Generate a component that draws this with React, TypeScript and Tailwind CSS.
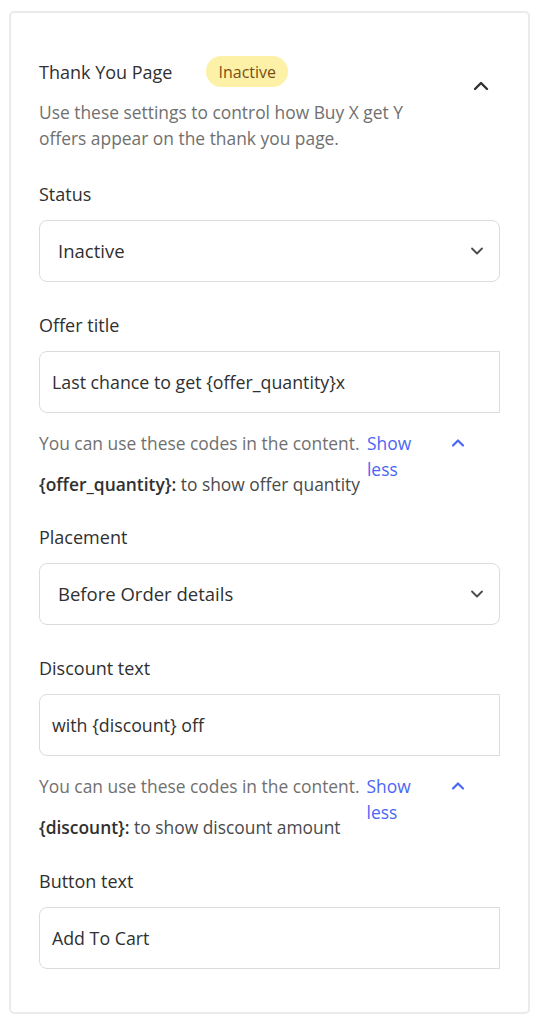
import { ChevronDown, ChevronUp } from "lucide-react";

const FONT = "font-['Open_Sans','Noto_Sans',sans-serif]";

function Label({ children }: { children: string }) {
  return <p className="text-[18px] leading-[26px] text-[#303030]">{children}</p>;
}

function SelectBox({ value }: { value: string }) {
  return (
    <div className="mt-[13px] flex h-[62px] items-center justify-between rounded-lg border border-[#dcdcdc] pl-[18px] pr-[12px]">
      <span className="text-[18.5px] text-[#303030]">{value}</span>
      <ChevronDown className="h-5 w-5 text-[#4a4a4a]" strokeWidth={2.2} />
    </div>
  );
}

function TextBox({ value }: { value: string }) {
  return (
    <div className="mt-[13px] flex h-[62px] items-center rounded-l-lg border border-[#dcdcdc] pl-[12px]">
      <span className="text-[17.8px] text-[#303030]">{value}</span>
    </div>
  );
}

function CodeHelp({ code, desc }: { code: string; desc: string }) {
  return (
    <div className="mt-[17px] flex items-start text-[17.4px] leading-[26px]">
      <div className="shrink-0">
        <p className="text-[#707070]">You can use these codes in the content.</p>
        <p className="mt-[15px] text-[#4a4a4a]">
          <span className="font-semibold text-[#303030]">{code}:</span> to show {desc}
        </p>
      </div>
      <a className="ml-[7px] w-[56px] text-[#4a66f5]">Show less</a>
      <ChevronUp className="ml-auto mr-[32px] mt-[3px] h-5 w-5 text-[#4a66f5]" strokeWidth={2.6} />
    </div>
  );
}

export default function App() {
  return (
    <div className={`min-h-[1024px] bg-white pl-[9px] pt-[11px] ${FONT}`}>
      <div className="w-[521px] rounded-[5px] border-2 border-[#ebebeb] pb-[43px] pl-[28px] pr-[28px] pt-[43px]">
        <div className="flex items-start">
          <div className="flex-1 pr-[40px]">
            <div className="flex items-center">
              <h2 className="text-[18px] leading-[26px] text-[#303030]">Thank You Page</h2>
              <span className="ml-[34px] inline-flex h-[31px] items-center rounded-full bg-[#fdf1a8] px-[12px] text-[16px] text-[#7a4d12]">
                Inactive
              </span>
            </div>
            <p className="mt-[12px] text-[17.4px] leading-[26px] text-[#707070]">
              Use these settings to control how Buy X get Y offers appear on the thank you page.
            </p>
          </div>
          <ChevronUp className="mr-[7px] mt-[18px] h-6 w-6 text-[#303030]" strokeWidth={2.4} />
        </div>

        <div className="mt-[30px]">
          <Label>Status</Label>
          <SelectBox value="Inactive" />
        </div>

        <div className="mt-[30px]">
          <Label>Offer title</Label>
          <TextBox value="Last chance to get {offer_quantity}x" />
          <CodeHelp code="{offer_quantity}" desc="offer quantity" />
        </div>

        <div className="mt-[27px]">
          <Label>Placement</Label>
          <SelectBox value="Before Order details" />
        </div>

        <div className="mt-[30px]">
          <Label>Discount text</Label>
          <TextBox value="with {discount} off" />
          <CodeHelp code="{discount}" desc="discount amount" />
        </div>

        <div className="mt-[28px]">
          <Label>Button text</Label>
          <TextBox value="Add To Cart" />
        </div>
      </div>
    </div>
  );
}
